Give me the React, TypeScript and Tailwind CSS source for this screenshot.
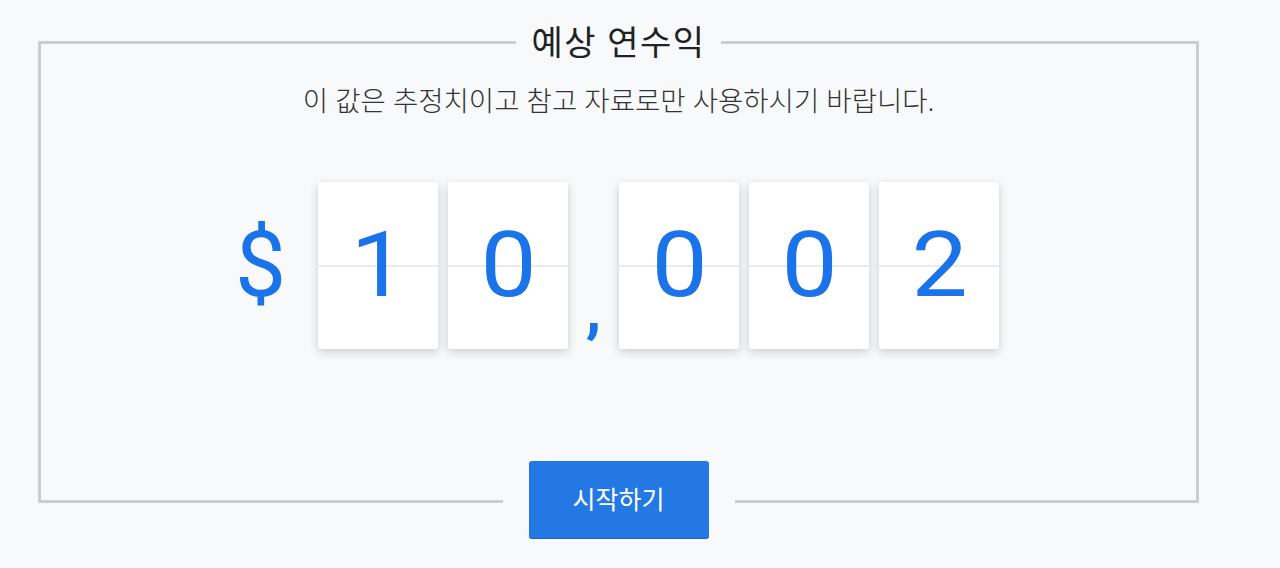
import React from 'react';

const digits = ['1', '0', ',', '0', '0', '2'];
const numFont = { fontFamily: 'Roboto, sans-serif' };

const FlipCard: React.FC<{ value: string }> = ({ value }) => (
  <div className="relative w-[120px] h-[167px] rounded-[3px] bg-white shadow-[0_3px_10px_rgba(0,0,0,0.18)] flex items-center justify-center">
    <div className="absolute left-0 right-0 top-[83px] h-[2px] bg-[#ebebef]"></div>
    <span className="relative inline-block scale-x-110 text-[91px] leading-none text-[#1a73e8]" style={numFont}>
      {value}
    </span>
  </div>
);

const App: React.FC = () => {
  return (
    <div
      className="min-h-screen bg-[#f8f9fa] pt-[41px] pl-[38px]"
      style={{ fontFamily: '"Noto Sans", "Noto Sans CJK KR", sans-serif' }}
    >
      <div className="relative w-[1161px] h-[462px] border-[3px] border-[#cdcdcd] flex flex-col items-center">
        {/* Title sits on the top border */}
        <h1 className="-mt-[23px] bg-[#f8f9fa] px-[15px] text-[34px] leading-[42px] font-normal tracking-[1.5px] text-[#202124]">
          예상 연수익
        </h1>
        <p className="mt-[20px] text-[27.5px] leading-[36px] font-light text-[#333]">
          이 값은 추정치이고 참고 자료로만 사용하시기 바랍니다.
        </p>

        {/* Counter */}
        <div className="mt-[63px] -ml-[3px] flex items-center">
          <span className="mr-[32px] text-[91px] leading-none text-[#1a73e8]" style={numFont}>$</span>
          <div className="flex">
            {digits.map((d, i) =>
              d === ',' ? (
                <div key={i} className="w-[51px] h-[167px] pt-[99px] text-center text-[58px] leading-none font-black text-[#1a73e8]" style={numFont}>
                  ,
                </div>
              ) : (
                <div key={i} className={i === 0 || i === 3 || i === 4 ? 'mr-[10px]' : ''}>
                  <FlipCard value={d} />
                </div>
              )
            )}
          </div>
        </div>

        {/* Button on the bottom border */}
        <div className="absolute top-[417px] left-1/2 -translate-x-1/2 bg-[#f8f9fa] px-[26px]">
          <button className="w-[180px] h-[78px] rounded-[3px] bg-[#2478e4] border-b border-[#1b66c9] text-white text-[25px]">
            시작하기
          </button>
        </div>
      </div>
    </div>
  );
};

export default App;
